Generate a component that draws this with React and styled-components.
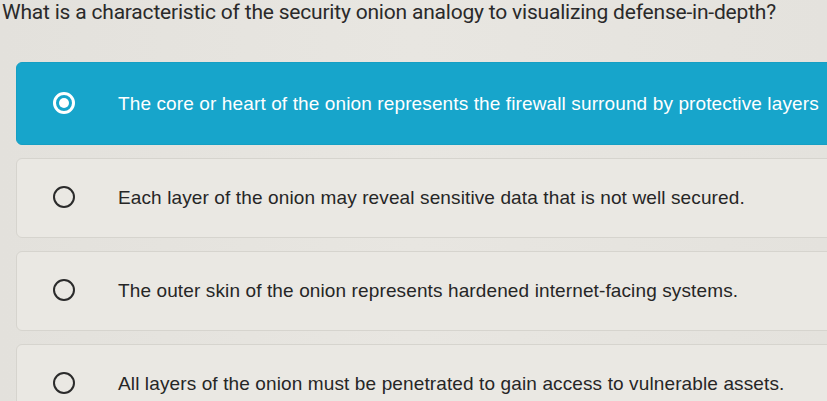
import React from "react";
import styled, { createGlobalStyle } from "styled-components";

const Global = createGlobalStyle`
  html, body { margin: 0; padding: 0; background: #e5e3de; }
  body { font-family: "Liberation Sans", Arial, sans-serif; overflow: hidden; }
`;

const Page = styled.div`
  width: 827px;
  height: 401px;
  overflow: hidden;
  background: linear-gradient(90deg, #e3e1dc 0%, #e8e6e1 50%, #e4e2dd 100%);
`;

const Question = styled.h1`
  margin: 0 0 0 2px;
  font-family: Roboto, "Liberation Sans", sans-serif;
  font-weight: 400;
  font-size: 21px;
  line-height: 25px;
  color: #2a2a2a;
  white-space: nowrap;
  letter-spacing: -0.2px;
`;

const List = styled.div`
  display: flex;
  flex-direction: column;
  gap: 13px;
  margin: 37px 0 0 16px;
  width: 840px;
`;

const Option = styled.div`
  display: flex;
  align-items: center;
  height: ${(p) => (p.$selected ? 83 : 80)}px;
  box-sizing: border-box;
  padding-left: 36px;
  border-radius: 6px;
  background: ${(p) => (p.$selected ? "#17a5cb" : "#eae8e3")};
  border: 1px solid ${(p) => (p.$selected ? "#159fc4" : "#d6d4ce")};
  color: ${(p) => (p.$selected ? "#ffffff" : "#262626")};
`;

const Radio = styled.span`
  flex: none;
  width: 22px;
  height: 22px;
  margin-top: -2px;
  box-sizing: border-box;
  border-radius: 50%;
  border: ${(p) => (p.$selected ? 3 : 2.5)}px solid ${(p) => (p.$selected ? "#ffffff" : "#2b2b2b")};
  display: flex;
  align-items: center;
  justify-content: center;
  &::after {
    content: "";
    width: 10px;
    height: 10px;
    border-radius: 50%;
    background: #ffffff;
    display: ${(p) => (p.$selected ? "block" : "none")};
  }
`;

const Label = styled.span`
  margin-left: 43px;
  font-size: 19px;
  white-space: nowrap;
  letter-spacing: 0.12px;
`;

const options = [
  "The core or heart of the onion represents the firewall surround by protective layers",
  "Each layer of the onion may reveal sensitive data that is not well secured.",
  "The outer skin of the onion represents hardened internet-facing systems.",
  "All layers of the onion must be penetrated to gain access to vulnerable assets.",
];

export default function App() {
  return (
    <Page>
      <Global />
      <Question>What is a characteristic of the security onion analogy to visualizing defense-in-depth?</Question>
      <List>
        {options.map((o, i) => (
          <Option key={i} $selected={i === 0}>
            <Radio $selected={i === 0} />
            <Label>{o}</Label>
          </Option>
        ))}
      </List>
    </Page>
  );
}
